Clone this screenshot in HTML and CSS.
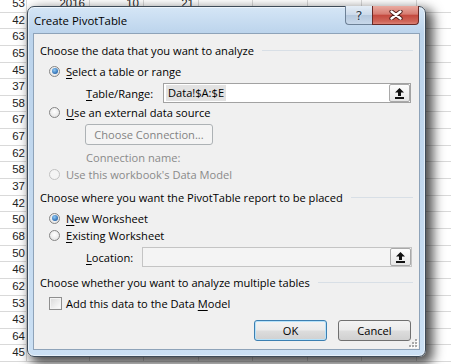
FILE: index.html
```html
<!DOCTYPE html>
<html lang="en">
<head>
    <meta charset="UTF-8">
    <meta name="viewport" content="width=device-width, initial-scale=1.0">
    <title>Create PivotTable</title>
    <link rel="stylesheet" href="styles.css">
</head>
<body>
    <!-- hoja de cálculo de fondo -->
    <div class="sheet">
        <div class="row"><span>53</span><span>2016</span><span>10</span><span>21</span></div>
        <div class="row"><span>42</span></div>
        <div class="row"><span>63</span></div>
        <div class="row"><span>65</span></div>
        <div class="row"><span>45</span></div>
        <div class="row"><span>37</span></div>
        <div class="row"><span>58</span></div>
        <div class="row"><span>67</span></div>
        <div class="row"><span>67</span></div>
        <div class="row"><span>62</span></div>
        <div class="row"><span>58</span></div>
        <div class="row"><span>37</span></div>
        <div class="row"><span>42</span></div>
        <div class="row"><span>50</span></div>
        <div class="row"><span>68</span></div>
        <div class="row"><span>50</span></div>
        <div class="row"><span>46</span></div>
        <div class="row"><span>62</span></div>
        <div class="row"><span>53</span></div>
        <div class="row"><span>43</span></div>
        <div class="row"><span>64</span></div>
        <div class="row"><span>45</span><span>2016</span><span>6</span><span>9</span></div>
    </div>

    <div class="dialog">
        <div class="titlebar">
            <span class="title">Create PivotTable</span>
            <div class="caption-buttons">
                <span class="cap-btn help">?</span>
                <span class="cap-btn close">
                    <svg width="14" height="10" viewBox="0 0 14 10">
                        <path d="M2.5 1.5 L11.5 8.5 M11.5 1.5 L2.5 8.5" stroke="#4a1a16" stroke-width="4.2" stroke-linecap="round"/>
                        <path d="M2.5 1.5 L11.5 8.5 M11.5 1.5 L2.5 8.5" stroke="#ffffff" stroke-width="2.4" stroke-linecap="round"/>
                    </svg>
                </span>
            </div>
        </div>

        <div class="client">
            <div class="group-title first"><span>Choose the data that you want to analyze</span></div>
            <div class="option"><span class="radio checked"></span><span><u>S</u>elect a table or range</span></div>
            <div class="field">
                <span class="field-label range-label"><u>T</u>able/Range:</span>
                <div class="input range-input">
                    <span class="sel">Data!$A:$E</span>
                    <span class="collapse">
                        <svg width="9" height="11" viewBox="0 0 9 11"><path d="M4.5 0 L9 4.5 L6 4.5 L6 8 L3 8 L3 4.5 L0 4.5 Z" fill="#111"/><rect x="0" y="9" width="9" height="2" fill="#111"/></svg>
                    </span>
                </div>
            </div>
            <div class="option"><span class="radio"></span><span><u>U</u>se an external data source</span></div>
            <div class="btn conn-btn">Choose Connection...</div>
            <div class="note">Connection name:</div>
            <div class="option disabled"><span class="radio"></span><span>Use this workbook's Data Model</span></div>

            <div class="group-title"><span>Choose where you want the PivotTable report to be placed</span></div>
            <div class="option"><span class="radio checked"></span><span><u>N</u>ew Worksheet</span></div>
            <div class="option"><span class="radio"></span><span><u>E</u>xisting Worksheet</span></div>
            <div class="field">
                <span class="field-label loc-label"><u>L</u>ocation:</span>
                <div class="input loc-input">
                    <span class="collapse">
                        <svg width="9" height="11" viewBox="0 0 9 11"><path d="M4.5 0 L9 4.5 L6 4.5 L6 8 L3 8 L3 4.5 L0 4.5 Z" fill="#111"/><rect x="0" y="9" width="9" height="2" fill="#111"/></svg>
                    </span>
                </div>
            </div>

            <div class="group-title"><span>Choose whether you want to analyze multiple tables</span></div>
            <div class="option"><span class="checkbox"></span><span>Add this data to the Data <u>M</u>odel</span></div>

            <div class="actions">
                <div class="btn default">OK</div>
                <div class="btn">Cancel</div>
            </div>

            <svg class="grip" width="11" height="11" viewBox="0 0 11 11">
                <g fill="#fff"><rect x="9" y="3" width="2" height="2"/><rect x="6" y="6" width="2" height="2"/><rect x="9" y="6" width="2" height="2"/><rect x="3" y="9" width="2" height="2"/><rect x="6" y="9" width="2" height="2"/><rect x="9" y="9" width="2" height="2"/></g>
                <g fill="#a9a9a9"><rect x="8" y="2" width="2" height="2"/><rect x="5" y="5" width="2" height="2"/><rect x="8" y="5" width="2" height="2"/><rect x="2" y="8" width="2" height="2"/><rect x="5" y="8" width="2" height="2"/><rect x="8" y="8" width="2" height="2"/></g>
            </svg>
        </div>
    </div>
</body>
</html>
```

FILE: styles.css
```css
* {
    box-sizing: border-box;
}

body {
    margin: 0;
    width: 451px;
    height: 364px;
    overflow: hidden;
    position: relative;
    background: #fff;
}

/* hoja */
.sheet {
    margin-top: -4px;
    font-family: "Liberation Sans", Arial, sans-serif;
    font-size: 11.5px;
    color: #222;
    background-image:
        linear-gradient(#d9d9d9, #d9d9d9), linear-gradient(#d9d9d9, #d9d9d9),
        linear-gradient(#d9d9d9, #d9d9d9), linear-gradient(#d9d9d9, #d9d9d9),
        linear-gradient(#d9d9d9, #d9d9d9), linear-gradient(#d9d9d9, #d9d9d9),
        linear-gradient(#d9d9d9, #d9d9d9), linear-gradient(#d9d9d9, #d9d9d9);
    background-repeat: no-repeat;
    background-size: 1px 100%;
    background-position: 26px 0, 89px 0, 143px 0, 198px 0, 252px 0, 307px 0, 361px 0, 416px 0;
}

.row {
    display: grid;
    grid-template-columns: 27px 63px 54px 55px;
    height: 16.65px;
    line-height: 15.65px;
    border-bottom: 1px solid #d9d9d9;
}

.row span {
    text-align: right;
    padding-right: 5px;
}

.row span:first-child {
    padding-right: 2px;
}

/* dialogo */
.dialog {
    position: absolute;
    left: 27px;
    top: 6px;
    width: 399px;
    height: 351px;
    display: flex;
    flex-direction: column;
    padding: 0 5px 6px;
    border: 1px solid #3e4b58;
    border-radius: 7px;
    background: linear-gradient(#d5e6f6, #bcd4ec 26px, #c3d9ef 55%, #cbe0f4);
    box-shadow: inset 0 0 0 1px rgba(255, 255, 255, 0.55), 5px 5px 12px 2px rgba(0, 0, 0, 0.7);
    font-family: "Open Sans", "Noto Sans", sans-serif;
    font-size: 11.1px;
    color: #000;
}

.titlebar {
    height: 26px;
    display: flex;
    justify-content: space-between;
    align-items: center;
}

.title {
    padding-left: 1px;
    font-size: 11.4px;
}

.caption-buttons {
    align-self: flex-start;
    display: flex;
    margin-top: -1px;
    margin-right: 1px;
}

.cap-btn {
    height: 19px;
    display: flex;
    align-items: center;
    justify-content: center;
    border: 1px solid #6d8196;
    border-top: none;
}

.help {
    width: 27px;
    border-right: none;
    border-radius: 0 0 0 4px;
    background: linear-gradient(#e4edf6, #ccdaea 48%, #b5c8dd 52%, #c8d8ea);
    font-family: "DejaVu Sans", sans-serif;
    font-size: 13px;
    color: #2b3a4a;
    text-shadow: 0 0 2px #fff;
}

.close {
    width: 47px;
    border-color: #6a2a25;
    border-radius: 0 0 4px 0;
    background: linear-gradient(#e9aba1, #d77d72 45%, #c44a3f 52%, #cf6558 85%, #dc8175);
}

.client {
    flex: 1;
    position: relative;
    padding: 8px 6px 0;
    background: #f0f0f0;
    border: 1px solid #8ea3b9;
    display: flex;
    flex-direction: column;
}

.group-title {
    height: 16px;
    margin-top: 7px;
    margin-bottom: 4px;
    display: flex;
    align-items: center;
}

.group-title.first {
    margin-top: 0;
}

.group-title::after {
    content: "";
    flex: 1;
    height: 1px;
    margin-left: 8px;
    background: #d8dfe6;
}

.option {
    height: 16px;
    margin-top: 1px;
    display: flex;
    align-items: center;
}

.option.disabled,
.note {
    color: #8a8a8a;
}

u {
    text-decoration-thickness: 1px;
    text-underline-offset: 2px;
}

.radio {
    width: 11px;
    height: 11px;
    flex: none;
    margin: 0 6px 0 9px;
    position: relative;
    border: 1px solid #858585;
    border-radius: 50%;
    background: radial-gradient(circle at 50% 40%, #ffffff, #dedede);
}

.radio.checked::after {
    content: "";
    position: absolute;
    left: 1.5px;
    top: 1.5px;
    width: 6px;
    height: 6px;
    border-radius: 50%;
    background: radial-gradient(circle at 40% 35%, #8fcaf6, #1b5aa3 85%);
}

.disabled .radio {
    border-color: #c2c2c2;
    background: #f4f4f4;
}

.checkbox {
    width: 13px;
    height: 13px;
    flex: none;
    margin: 0 4px 0 9px;
    border: 1px solid #8f8f8f;
    background: linear-gradient(135deg, #d9d9d9, #ffffff);
    box-shadow: inset 0 0 0 1px #f4f4f4;
}

.field {
    height: 20px;
    margin-top: 4px;
    display: flex;
    align-items: center;
}

.field-label {
    margin-left: 46px;
    flex: none;
}

.range-label {
    width: 77px;
}

.loc-label {
    width: 56px;
}

.input {
    height: 20px;
    display: flex;
    align-items: center;
    padding-left: 2px;
    border: 1px solid #a2a2a2;
    background: #fff;
}

.range-input {
    width: 248px;
}

.loc-input {
    width: 270px;
    border-color: #c4c4c4;
    background: #f4f4f4;
}

.sel {
    background: #e2e2e2;
    padding: 0 2px;
    line-height: 16px;
}

.collapse {
    margin-left: auto;
    width: 21px;
    height: 18px;
    display: flex;
    align-items: center;
    justify-content: center;
    border: 1px solid #a9a9a9;
    border-radius: 2px;
    background: linear-gradient(#fdfdfd, #e6e6e6);
}

.btn {
    width: 73px;
    height: 21px;
    display: flex;
    align-items: center;
    justify-content: center;
    border: 1px solid #707070;
    border-radius: 3px;
    background: linear-gradient(#f3f3f3, #ebebeb 48%, #dddddd 52%, #d0d0d0);
}

.btn.default {
    border-color: #3c7fb1;
    box-shadow: inset 0 0 0 1px #b6e2fa;
}

.conn-btn {
    width: 128px;
    margin: 4px 0 0 45px;
    border-color: #adb2b5;
    background: #f4f4f4;
    color: #838383;
}

.note {
    height: 16px;
    margin: 4px 0 0 46px;
    display: flex;
    align-items: center;
}

.actions {
    margin-top: 9px;
    margin-right: 2px;
    display: flex;
    justify-content: flex-end;
    gap: 11px;
}

.grip {
    position: absolute;
    right: 1px;
    bottom: 1px;
}
```
